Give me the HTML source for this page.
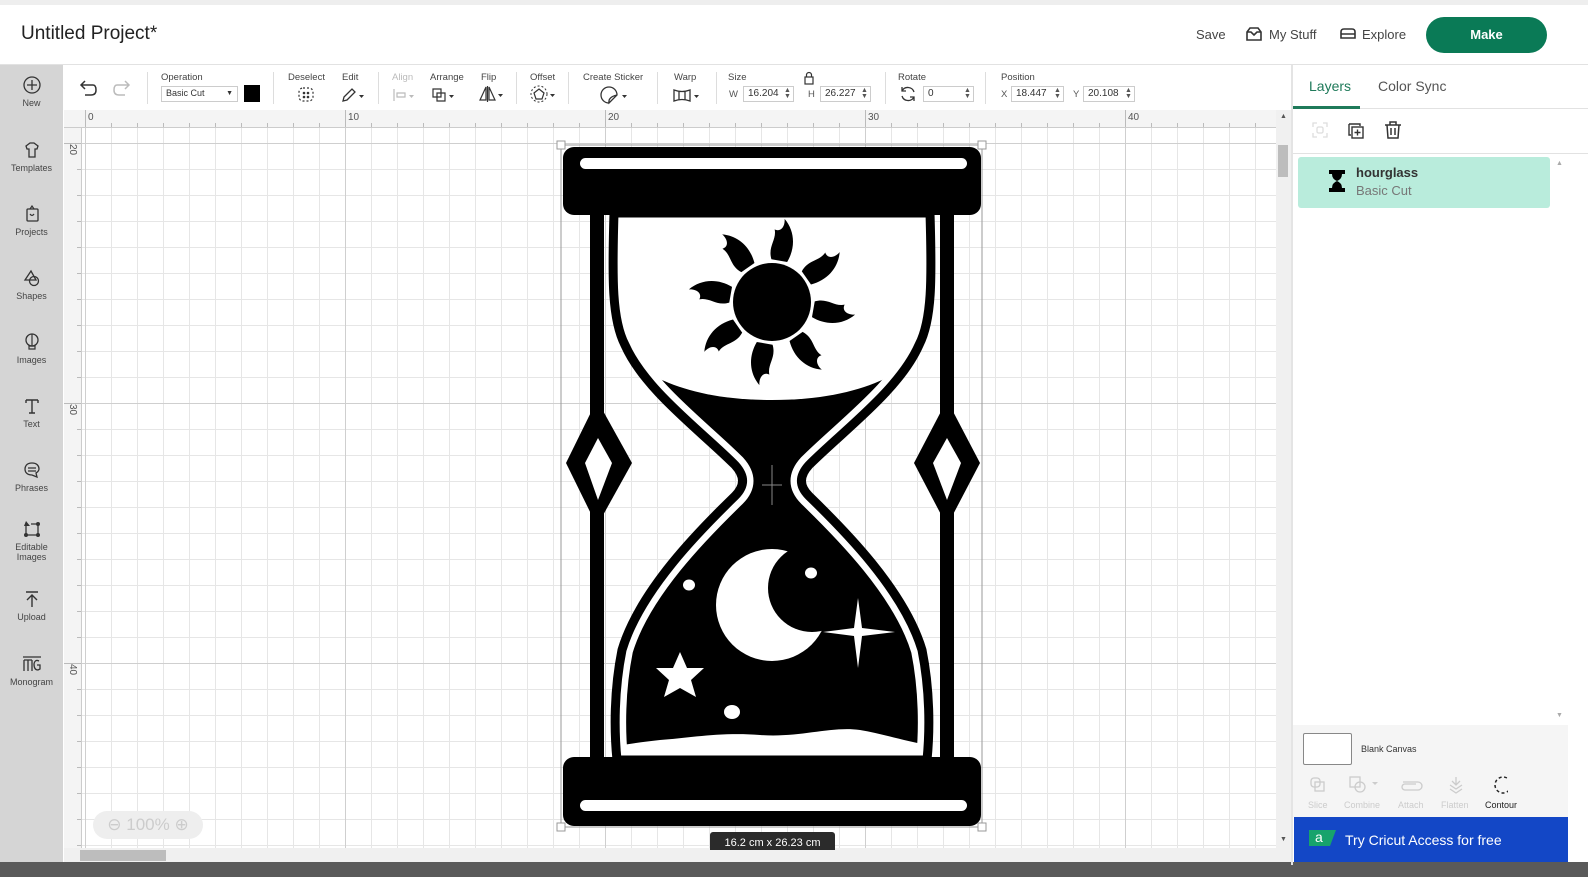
<!DOCTYPE html>
<html><head><meta charset="utf-8"><style>
*{box-sizing:border-box;margin:0;padding:0}
body{width:1588px;height:877px;position:relative;overflow:hidden;background:#fff;font-family:"Liberation Sans",sans-serif;color:#333}
.abs{position:absolute}
.lbl{position:absolute;font-size:9.5px;color:#444;top:72px}
.inp{position:absolute;top:86px;height:16px;border:1px solid #ccc;font-size:10px;color:#333;padding:1px 4px;background:#fff}
.spin{position:absolute;right:1px;top:1px;width:9px;height:12px;font-size:7px;line-height:6px;text-align:center;color:#555}
.sep{position:absolute;top:72px;width:1px;height:32px;background:#ddd}
.side{position:absolute;left:0;width:63px;text-align:center;font-size:9px;color:#444}
.side svg{display:block;margin:0 auto 4px}
</style></head><body>
<div class="abs" style="left:0;top:0;width:1588px;height:5px;background:#eee"></div>
<div class="abs" style="left:21px;top:23px;font-size:19px;color:#222">Untitled Project*</div>
<div class="abs" style="left:1196px;top:27px;font-size:13px;color:#444">Save</div>
<svg class="abs" style="left:1245px;top:26px" width="18" height="16" viewBox="0 0 18 16"><path d="M2 6 L2 14 L16 14 L16 6 L13 2 L5 2 Z M2 6 L6 6 L9 9 L12 6 L16 6" fill="none" stroke="#333" stroke-width="1.6"/></svg>
<div class="abs" style="left:1269px;top:27px;font-size:13px;color:#444">My Stuff</div>
<svg class="abs" style="left:1339px;top:27px" width="18" height="14" viewBox="0 0 18 14"><path d="M2 5 Q2 2 5 2 L13 2 Q16 2 16 5 L16 11 L2 11 Z M2 7 L16 7" fill="none" stroke="#333" stroke-width="1.6"/></svg>
<div class="abs" style="left:1362px;top:27px;font-size:13px;color:#444">Explore</div>
<div class="abs" style="left:1426px;top:17px;width:121px;height:36px;border-radius:18px;background:#0a7a56;color:#fff;font-weight:bold;font-size:13px;text-align:center;line-height:36px">Make</div>
<div class="abs" style="left:0;top:64px;width:1588px;height:1px;background:#e2e2e2"></div>

<div class="abs" style="left:0;top:65px;width:63px;height:800px;background:#d5d5d5"></div>
<div class="side" style="top:76px"><svg width="18" height="18"><circle cx="9" cy="9" r="8" fill="none" stroke="#333" stroke-width="1.3"/><path d="M9 4v10M4 9h10" stroke="#333" stroke-width="1.3"/></svg>New</div>
<div class="side" style="top:141px"><svg width="18" height="18"><path d="M3 5 L7 2 L11 2 L15 5 L14 8 L12 8 L12 16 L6 16 L6 8 L4 8 Z" fill="none" stroke="#333" stroke-width="1.3"/></svg>Templates</div>
<div class="side" style="top:205px"><svg width="18" height="18"><rect x="4" y="4" width="11" height="12" rx="1" fill="none" stroke="#333" stroke-width="1.3"/><path d="M7 4 L9 1 L11 4 M7 9 Q9 12 11 9" fill="none" stroke="#333" stroke-width="1.2"/></svg>Projects</div>
<div class="side" style="top:269px"><svg width="18" height="18"><path d="M8 2 L2 11 L13 11 Z" fill="none" stroke="#333" stroke-width="1.3"/><circle cx="11" cy="12" r="4.5" fill="none" stroke="#333" stroke-width="1.3"/></svg>Shapes</div>
<div class="side" style="top:333px"><svg width="18" height="18"><ellipse cx="9" cy="7" rx="6" ry="6" fill="none" stroke="#333" stroke-width="1.3"/><path d="M9 1v12M6 13h6v3h-6z" fill="none" stroke="#333" stroke-width="1.2"/></svg>Images</div>
<div class="side" style="top:397px"><svg width="18" height="18"><path d="M3 3h12M9 3v13M3 3v3M15 3v3M6 16h6" fill="none" stroke="#333" stroke-width="1.4"/></svg>Text</div>
<div class="side" style="top:461px"><svg width="18" height="18"><path d="M9 2 C3 2 2 6 2 8 C2 12 5 14 9 14 L14 16 L13 12 C15 11 16 9 16 8 C16 5 14 2 9 2Z M5 7h8M5 10h8" fill="none" stroke="#333" stroke-width="1.3"/></svg>Phrases</div>
<div class="side" style="top:520px"><svg width="18" height="18"><path d="M3 5 L3 15 L15 15 L15 4 L8 4" fill="none" stroke="#333" stroke-width="1.3"/><path d="M3 1 L7 6 L1 6Z" fill="#333"/><circle cx="3" cy="15" r="2" fill="#333"/><circle cx="15" cy="15" r="2" fill="#333"/><circle cx="15" cy="4" r="2" fill="#333"/></svg>Editable<br>Images</div>
<div class="side" style="top:590px"><svg width="18" height="18"><path d="M3 2h12M9 5v12M4 10 L9 5 L14 10" fill="none" stroke="#333" stroke-width="1.4"/></svg>Upload</div>
<div class="side" style="top:655px"><svg width="20" height="18"><path d="M1 2h18M2 5v11M6 5v11M10 5v11M2 5h8M17 6 Q13 4 12 9 Q12 15 16 15 L18 14 L18 10 L15 10" fill="none" stroke="#333" stroke-width="1.3"/></svg>Monogram</div>

<svg class="abs" style="left:78px;top:80px" width="20" height="18"><path d="M4 5 L15 5 Q18 5 18 10 Q18 15 13 15 L7 15 M7 1 L3 5 L7 9" fill="none" stroke="#333" stroke-width="1.5"/></svg>
<svg class="abs" style="left:112px;top:80px" width="20" height="18"><path d="M16 5 L5 5 Q2 5 2 10 Q2 15 7 15 L13 15 M13 1 L17 5 L13 9" fill="none" stroke="#bbb" stroke-width="1.5"/></svg>
<div class="sep" style="left:147px"></div>
<div class="lbl" style="left:161px">Operation</div>
<div class="inp" style="left:161px;width:77px;font-size:9px">Basic Cut<span style="position:absolute;right:4px;font-size:7px;top:3px">▼</span></div>
<div class="abs" style="left:244px;top:85px;width:16px;height:17px;background:#000"></div>
<div class="sep" style="left:273px"></div>
<div class="lbl" style="left:288px">Deselect</div>
<svg class="abs" style="left:297px;top:86px" width="18" height="17"><rect x="2" y="2" width="14" height="13" rx="4" fill="none" stroke="#333" stroke-width="1.2" stroke-dasharray="2 2"/><circle cx="7" cy="7" r="1.3" fill="#333"/><circle cx="11" cy="7" r="1.3" fill="#333"/><circle cx="7" cy="11" r="1.3" fill="#333"/><circle cx="11" cy="11" r="1.3" fill="#333"/></svg>
<div class="lbl" style="left:342px">Edit</div>
<svg class="abs" style="left:340px;top:86px" width="26" height="17"><path d="M3 15 L4 11 L12 3 L15 6 L7 14 Z" fill="none" stroke="#333" stroke-width="1.3"/><path d="M19 9 L24 9 L21.5 12Z" fill="#333"/></svg>
<div class="sep" style="left:378px"></div>
<div class="lbl" style="left:392px;color:#bbb">Align</div>
<svg class="abs" style="left:392px;top:86px" width="28" height="17"><path d="M2 3v12M5 7h8v4h-8z" fill="none" stroke="#bbb" stroke-width="1.2"/><path d="M17 9 L22 9 L19.5 12Z" fill="#bbb"/></svg>
<div class="lbl" style="left:430px">Arrange</div>
<svg class="abs" style="left:431px;top:86px" width="28" height="17"><path d="M2 3h8v8h-8z M6 7h8v8h-8z" fill="none" stroke="#333" stroke-width="1.2"/><path d="M18 9 L23 9 L20.5 12Z" fill="#333"/></svg>
<div class="lbl" style="left:481px">Flip</div>
<svg class="abs" style="left:478px;top:85px" width="28" height="18"><path d="M8 2 L2 15 L8 15 Z M11 2 L17 15 L11 15 Z M9.5 1v16" fill="none" stroke="#333" stroke-width="1.2"/><path d="M20 9 L25 9 L22.5 12Z" fill="#333"/></svg>
<div class="sep" style="left:516px"></div>
<div class="lbl" style="left:530px">Offset</div>
<svg class="abs" style="left:530px;top:85px" width="28" height="18"><path d="M9 4 L14 8 L12 14 L6 14 L4 8 Z" fill="none" stroke="#333" stroke-width="1.2"/><circle cx="9" cy="9" r="8" fill="none" stroke="#333" stroke-width="1" stroke-dasharray="2 2"/><path d="M20 9 L25 9 L22.5 12Z" fill="#333"/></svg>
<div class="sep" style="left:568px"></div>
<div class="lbl" style="left:583px">Create Sticker</div>
<svg class="abs" style="left:600px;top:86px" width="32" height="20"><path d="M9 17 A8 8 0 1 1 17 9 L9 17 Q8 11 17 9" fill="none" stroke="#333" stroke-width="1.3"/><path d="M22 9 L27 9 L24.5 12Z" fill="#333"/></svg>
<div class="sep" style="left:657px"></div>
<div class="lbl" style="left:674px">Warp</div>
<svg class="abs" style="left:672px;top:87px" width="30" height="16"><path d="M2 3 Q10 6 18 3 L18 14 Q10 11 2 14 Z M7 5v8M13 5v8" fill="none" stroke="#333" stroke-width="1.3"/><path d="M22 8 L27 8 L24.5 11Z" fill="#333"/></svg>
<div class="sep" style="left:716px"></div>
<div class="lbl" style="left:728px">Size</div>
<svg class="abs" style="left:802px;top:71px" width="14" height="14"><rect x="3" y="6" width="8" height="7" fill="none" stroke="#333" stroke-width="1.2"/><path d="M4.5 6 V4 A2.5 2.5 0 0 1 9.5 4 V6" fill="none" stroke="#333" stroke-width="1.2"/></svg>
<div class="abs" style="left:729px;top:89px;font-size:9.5px;color:#555">W</div>
<div class="inp" style="left:743px;width:51px">16.204<div class="spin">▲<br>▼</div></div>
<div class="abs" style="left:808px;top:89px;font-size:9.5px;color:#555">H</div>
<div class="inp" style="left:820px;width:51px">26.227<div class="spin">▲<br>▼</div></div>
<div class="sep" style="left:885px"></div>
<div class="lbl" style="left:898px">Rotate</div>
<svg class="abs" style="left:899px;top:85px" width="18" height="18"><path d="M15 7 A6.5 6.5 0 0 0 3 6 M3 11 A6.5 6.5 0 0 0 15 12 M3 2v4h4 M15 16v-4h-4" fill="none" stroke="#333" stroke-width="1.3"/></svg>
<div class="inp" style="left:923px;width:51px">0<div class="spin">▲<br>▼</div></div>
<div class="sep" style="left:985px"></div>
<div class="lbl" style="left:1001px">Position</div>
<div class="abs" style="left:1001px;top:89px;font-size:9.5px;color:#555">X</div>
<div class="inp" style="left:1011px;width:53px">18.447<div class="spin">▲<br>▼</div></div>
<div class="abs" style="left:1073px;top:89px;font-size:9.5px;color:#555">Y</div>
<div class="inp" style="left:1083px;width:52px">20.108<div class="spin">▲<br>▼</div></div>

<div class="abs" style="left:64px;top:110px;width:1229px;height:18px;background:#f4f4f4;border-bottom:1px solid #ccc;background-image:linear-gradient(to right,#bbb 1px,transparent 1px),linear-gradient(to right,#bbb 1px,transparent 1px);background-size:260px 18px,26px 5px;background-position:21px 0,21px 13px;background-repeat:repeat-x"></div>
<div class="abs" style="left:88px;top:112px;font-size:10px;color:#555">0</div>
<div class="abs" style="left:348px;top:112px;font-size:10px;color:#555">10</div>
<div class="abs" style="left:608px;top:112px;font-size:10px;color:#555">20</div>
<div class="abs" style="left:868px;top:112px;font-size:10px;color:#555">30</div>
<div class="abs" style="left:1128px;top:112px;font-size:10px;color:#555">40</div>
<div class="abs" style="left:64px;top:128px;width:18px;height:720px;background:#f4f4f4;border-right:1px solid #ccc;background-image:linear-gradient(#bbb 1px,transparent 1px),linear-gradient(#bbb 1px,transparent 1px);background-size:18px 260px,5px 26px;background-position:0 15px,13px 15px;background-repeat:repeat-y"></div>
<div class="abs" style="left:64px;top:146px;font-size:10px;color:#555;transform:rotate(90deg);transform-origin:8px 6px">20</div>
<div class="abs" style="left:64px;top:406px;font-size:10px;color:#555;transform:rotate(90deg);transform-origin:8px 6px">30</div>
<div class="abs" style="left:64px;top:666px;font-size:10px;color:#555;transform:rotate(90deg);transform-origin:8px 6px">40</div>

<div class="abs" style="left:82px;top:128px;width:1194px;height:720px;background-color:#fff;background-image:linear-gradient(to right,#cfcfcf 1px,transparent 1px),linear-gradient(#cfcfcf 1px,transparent 1px),linear-gradient(to right,#e6e6e6 1px,transparent 1px),linear-gradient(#e6e6e6 1px,transparent 1px);background-size:260px 260px,260px 260px,26px 26px,26px 26px;background-position:3px 15px,3px 15px,3px 15px,3px 15px"></div>
<div class="abs" style="left:1276px;top:110px;width:15px;height:738px;background:#f0f0f0"></div>
<div class="abs" style="left:1278px;top:145px;width:10px;height:32px;background:#bdbdbd"></div>
<div class="abs" style="left:1280px;top:113px;font-size:7px;color:#555">▲</div>
<div class="abs" style="left:1280px;top:836px;font-size:7px;color:#555">▼</div>
<div class="abs" style="left:64px;top:848px;width:1227px;height:15px;background:#f0f0f0"></div>
<div class="abs" style="left:80px;top:850px;width:86px;height:11px;background:#bdbdbd"></div>
<div class="abs" style="left:0;top:862px;width:1588px;height:15px;background:#5a5a5a"></div>

<div class="abs" style="left:93px;top:811px;width:110px;height:28px;border-radius:14px;background:#eee;color:#ccc;font-size:17px;line-height:28px;text-align:center">⊖ 100% ⊕</div>

<svg class="abs" style="left:0;top:0" width="1290" height="862" viewBox="0 0 1290 862">
<defs>
<path id="G" d="M614,213 C612,280 612,320 625,345 C645,390 700,430 735,465 C745,476 745,486 735,496 C700,530 640,590 622,650 C614,690 614,730 617,760 L927,760 C930,730 930,690 922,650 C904,590 844,530 809,496 C799,486 799,476 809,465 C844,430 899,390 919,345 C932,320 932,280 930,213 Z"/>
<clipPath id="cg"><use href="#G"/></clipPath>
<path id="ray" d="M-8,-42 C-14,-54 -6,-62 -10,-72 C-4,-70 0,-76 -2,-84 C10,-74 14,-58 8,-42 Z"/>
</defs>
<rect x="561" y="145" width="421" height="682" fill="none" stroke="#999" stroke-width="1"/>
<use href="#G" fill="#000"/>
<g clip-path="url(#cg)">
<path d="M600,200 L950,200 L950,328 C920,360 880,400 772,400 C664,400 624,360 594,328 Z" fill="#fff"/>
<path d="M600,765 L950,765 L950,748 C915,745 890,735 860,730 C830,726 800,738 760,735 C720,732 690,738 660,740 C640,742 625,745 600,748 Z" fill="#fff"/>
<use href="#G" fill="none" stroke="#fff" stroke-width="22"/>
</g>
<use href="#G" fill="none" stroke="#000" stroke-width="9"/>
<rect x="590" y="213" width="14" height="546" fill="#000"/>
<rect x="940" y="213" width="14" height="546" fill="#000"/>
<path d="M597,400 L632,463 L597,526 L566,463 Z" fill="#000"/>
<path d="M598,438 L612,463 L598,500 L585,463 Z" fill="#fff"/>
<path d="M947,400 L980,463 L947,526 L914,463 Z" fill="#000"/>
<path d="M947,438 L961,463 L947,500 L933,463 Z" fill="#fff"/>
<rect x="563" y="147" width="418" height="68" rx="11" fill="#000"/>
<rect x="580" y="158" width="387" height="11" rx="5.5" fill="#fff"/>
<rect x="563" y="757" width="418" height="69" rx="11" fill="#000"/>
<rect x="580" y="800" width="387" height="11" rx="5.5" fill="#fff"/>
<g transform="translate(772,302)">
<circle r="43" fill="#fff"/>
<circle r="39" fill="#000"/>
<g fill="#000"><use href="#ray" transform="rotate(10)"/><use href="#ray" transform="rotate(55)"/><use href="#ray" transform="rotate(100)"/><use href="#ray" transform="rotate(145)"/><use href="#ray" transform="rotate(190)"/><use href="#ray" transform="rotate(235)"/><use href="#ray" transform="rotate(280)"/><use href="#ray" transform="rotate(325)"/></g>
</g>
<circle cx="772" cy="605" r="56" fill="#fff"/>
<circle cx="812" cy="588" r="44" fill="#000"/>
<path d="M858,598 L862,628 L895,632 L862,636 L858,668 L854,636 L823,632 L854,628 Z" fill="#fff"/>
<path d="M680,652 L687,668 L704,668 L691,680 L696,697 L680,688 L664,697 L669,680 L656,668 L673,668 Z" fill="#fff"/>
<ellipse cx="689" cy="585" rx="6" ry="5.5" fill="#fff"/>
<ellipse cx="811" cy="573" rx="6" ry="5.5" fill="#fff"/>
<ellipse cx="732" cy="712" rx="8" ry="7" fill="#fff"/>
<path d="M762,485 H782 M772,465 V505" stroke="#888" stroke-width="1"/>
<g fill="#fff" stroke="#999"><rect x="557" y="141" width="8" height="8"/><rect x="978" y="141" width="8" height="8"/><rect x="557" y="823" width="8" height="8"/><rect x="978" y="823" width="8" height="8"/></g>
</svg>
<div class="abs" style="left:710px;top:832px;width:125px;height:18px;background:#2b2b2b;border-radius:3px 3px 0 0;color:#fff;font-size:11px;text-align:center;line-height:22px">16.2 cm x 26.23 cm</div>

<div class="abs" style="left:1291px;top:65px;width:2px;height:800px;background:#e4e4e4"></div>
<div class="abs" style="left:1309px;top:78px;font-size:14px;color:#1f7a5a">Layers</div>
<div class="abs" style="left:1378px;top:78px;font-size:14px;color:#555">Color Sync</div>
<div class="abs" style="left:1293px;top:108px;width:295px;height:1px;background:#e2e2e2"></div>
<div class="abs" style="left:1293px;top:106px;width:67px;height:3px;background:#1f7a5a"></div>
<svg class="abs" style="left:1310px;top:120px" width="20" height="20"><path d="M3 7V3h4M13 3h4v4M17 13v4h-4M7 17H3v-4" fill="none" stroke="#ddd" stroke-width="1.3"/><rect x="7" y="7" width="6" height="6" rx="1.5" fill="none" stroke="#ddd" stroke-width="1.3"/></svg>
<svg class="abs" style="left:1346px;top:120px" width="20" height="20"><path d="M3 4h11v2M3 4v11h2" fill="none" stroke="#333" stroke-width="1.4"/><rect x="6" y="7" width="11" height="11" fill="none" stroke="#333" stroke-width="1.4"/><path d="M11.5 9.5v6M8.5 12.5h6" stroke="#333" stroke-width="1.4"/></svg>
<svg class="abs" style="left:1383px;top:120px" width="20" height="20"><path d="M2 5h16M7 5V2h6v3M4 5l1 13h10l1-13M8 8v7M12 8v7" fill="none" stroke="#333" stroke-width="1.5"/></svg>
<div class="abs" style="left:1293px;top:153px;width:295px;height:1px;background:#e2e2e2"></div>
<div class="abs" style="left:1298px;top:157px;width:252px;height:51px;background:#b9ecdc;border-radius:3px"></div>
<svg class="abs" style="left:1329px;top:170px" width="16" height="22"><rect x="0" y="0" width="16" height="4" fill="#000"/><rect x="0" y="18" width="16" height="4" fill="#000"/><path d="M3 4 Q3 9 8 11 Q3 13 3 18 L13 18 Q13 13 8 11 Q13 9 13 4Z" fill="#000"/></svg>
<div class="abs" style="left:1356px;top:165px;font-size:13px;font-weight:bold;color:#333">hourglass</div>
<div class="abs" style="left:1356px;top:183px;font-size:13px;color:#777">Basic Cut</div>
<div class="abs" style="left:1556px;top:160px;font-size:7px;color:#aaa">▲</div>
<div class="abs" style="left:1556px;top:712px;font-size:7px;color:#aaa">▼</div>
<div class="abs" style="left:1293px;top:725px;width:275px;height:92px;background:#f5f5f5"></div>
<div class="abs" style="left:1303px;top:733px;width:49px;height:32px;background:#fff;border:1px solid #888;border-radius:2px"></div>
<div class="abs" style="left:1361px;top:744px;font-size:9px;color:#333">Blank Canvas</div>
<svg class="abs" style="left:1308px;top:775px" width="200" height="22"><g fill="none" stroke="#ccc" stroke-width="1.3"><rect x="3" y="3" width="9" height="9" rx="3"/><rect x="7" y="7" width="9" height="9"/><rect x="42" y="2" width="10" height="10"/><circle cx="52" cy="12" r="5"/><path d="M95 7 H110 A4 4 0 0 1 110 15 H97 A3 3 0 0 1 97 9 H108"/><path d="M148 2 V10 M144 6 L148 10 L152 6 M142 10 L148 14 L154 10 M142 14 L148 18 L154 14"/></g><path d="M64 7 L70 7 L67 10Z" fill="#ccc"/><circle cx="195" cy="10" r="8" fill="none" stroke="#222" stroke-width="1.5" stroke-dasharray="3 2.5"/></svg>
<div class="abs" style="left:1308px;top:800px;font-size:9px;color:#ccc">Slice</div>
<div class="abs" style="left:1344px;top:800px;font-size:9px;color:#ccc">Combine</div>
<div class="abs" style="left:1398px;top:800px;font-size:9px;color:#ccc">Attach</div>
<div class="abs" style="left:1441px;top:800px;font-size:9px;color:#ccc">Flatten</div>
<div class="abs" style="left:1485px;top:800px;font-size:9px;color:#222">Contour</div>
<div class="abs" style="left:1294px;top:817px;width:274px;height:45px;background:#1347c6"></div>
<svg class="abs" style="left:1308px;top:830px" width="30" height="20"><path d="M1 0 H28 L22 16 H1 Z" fill="#17a36c"/></svg>
<div class="abs" style="left:1315px;top:829px;font-size:14px;color:#fff">a</div>
<div class="abs" style="left:1345px;top:832px;font-size:14px;color:#fff">Try Cricut Access for free</div>
</body></html>
